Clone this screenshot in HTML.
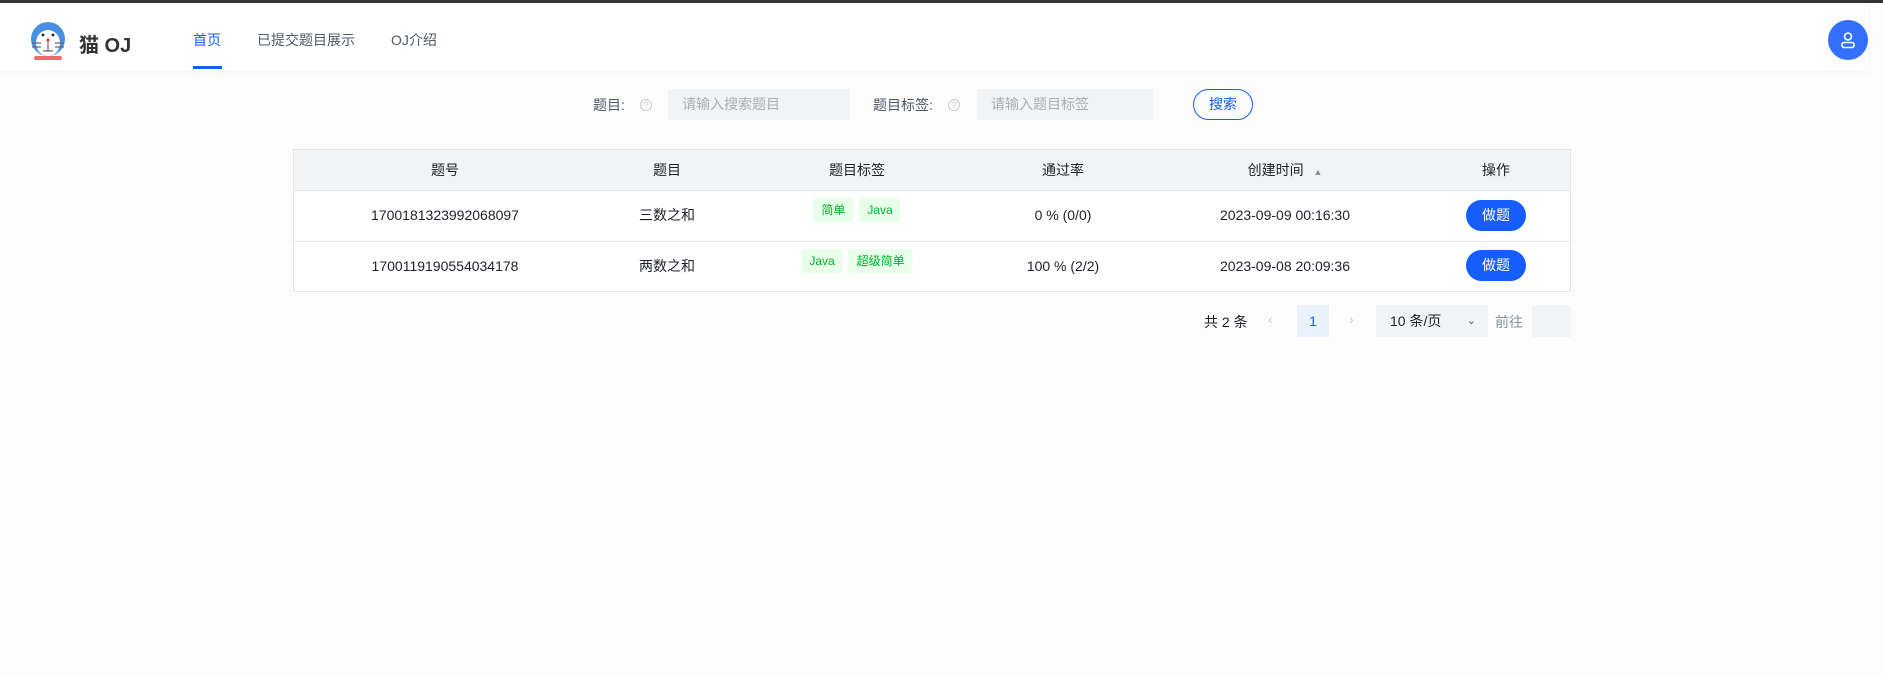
<!DOCTYPE html>
<html><head><meta charset="utf-8"><style>
*{box-sizing:border-box;margin:0;padding:0}
body{width:1883px;height:675px;background:#fcfcfc;font-family:"Liberation Sans","Noto Sans CJK SC",sans-serif;color:#1d2129;position:relative;overflow:hidden;font-size:14px}
.abs{position:absolute}
.top{left:0;top:0;width:1883px;height:3px;background:#333}
.hdr{left:0;top:3px;width:1868px;height:68px;background:#fff;box-shadow:0 2px 4px rgba(0,0,0,.03)}
.nav{top:30px;font-size:14px;color:#4e5969}
.inp{background:#f2f3f5;color:#a9aeb8;font-size:14px;line-height:31px;padding-left:14px;height:31px}
.q{width:12px;height:12px;border:1px solid #c9cdd4;border-radius:50%;font-size:9px;color:#c9cdd4;text-align:center;line-height:10px}
.tbl{left:293px;top:149px;width:1278px;height:143px;border:1px solid #e5e6eb;background:#fff}
.row{position:absolute;left:0;width:100%;border-bottom:1px solid #e5e6eb}
.c{position:absolute;transform:translateX(-50%);white-space:nowrap;font-size:14px;line-height:20px}
.tag{display:inline-block;background:#e8ffea;color:#00b42a;font-size:12px;height:24px;line-height:24px;padding:0 8px;margin:0 3px;border-radius:2px}
.btn{background:#165dff;color:#fff;border-radius:16px;width:60px;height:31px;line-height:31px;text-align:center;font-size:14px}
</style></head><body>
<div class="abs top"></div>
<div class="abs hdr"></div>
<svg class="abs" style="left:28px;top:21px" width="40" height="42" viewBox="0 0 40 42">
<ellipse cx="20" cy="18" rx="17" ry="17" fill="#4a90e2"/>
<ellipse cx="20" cy="22" rx="12" ry="13" fill="#fff"/>
<circle cx="15" cy="14" r="1.5" fill="#333"/><circle cx="25" cy="14" r="1.5" fill="#333"/>
<circle cx="20" cy="19" r="1.5" fill="#e33"/>
<path d="M4 22h9M4 26h9M27 22h9M27 26h9M20 20v10M15 30h10" stroke="#666" stroke-width="1.2" fill="none"/>
<rect x="6" y="35" width="28" height="4" rx="2" fill="#f06a6a"/>
</svg>
<div class="abs" style="left:79px;top:29px;font-size:20px;font-weight:bold;color:#333">猫 OJ</div>
<div class="abs nav" style="left:193px;color:#165dff">首页</div>
<div class="abs" style="left:193px;top:66px;width:29px;height:3px;background:#165dff"></div>
<div class="abs nav" style="left:257px">已提交题目展示</div>
<div class="abs nav" style="left:391px">OJ介绍</div>
<div class="abs" style="left:1828px;top:20px;width:40px;height:40px;border-radius:50%;background:#3370ff"></div>
<svg class="abs" style="left:1838px;top:30px" width="20" height="20" viewBox="0 0 20 20"><circle cx="10" cy="6.5" r="3.5" fill="none" stroke="#fff" stroke-width="1.6"/><rect x="4" y="12.5" width="12" height="5" rx="2" fill="none" stroke="#fff" stroke-width="1.6"/></svg>

<div class="abs" style="left:593px;top:95px;color:#4e5969">题目:</div>
<div class="abs q" style="left:640px;top:99px">?</div>
<div class="abs inp" style="left:668px;top:89px;width:182px">请输入搜索题目</div>
<div class="abs" style="left:873px;top:95px;color:#4e5969">题目标签:</div>
<div class="abs q" style="left:948px;top:99px">?</div>
<div class="abs inp" style="left:977px;top:89px;width:176px">请输入题目标签</div>
<div class="abs" style="left:1193px;top:89px;width:60px;height:31px;border:1px solid #165dff;border-radius:16px;color:#165dff;text-align:center;line-height:29px">搜索</div>

<div class="abs tbl">
<div class="row" style="top:0;height:41px;background:#f2f3f5">
<div class="c" style="left:151px;top:10px">题号</div><div class="c" style="left:373px;top:10px">题目</div><div class="c" style="left:563px;top:10px">题目标签</div><div class="c" style="left:769px;top:10px">通过率</div><div class="c" style="left:991px;top:10px">创建时间 <span style="color:#86909c;font-size:9px;margin-left:6px">▲</span></div><div class="c" style="left:1202px;top:10px">操作</div>
</div>
<div class="row" style="top:41px;height:51px">
<div class="c" style="left:151px;top:14px">1700181323992068097</div><div class="c" style="left:373px;top:14px">三数之和</div><div class="c" style="left:563px;top:7px"><span class="tag">简单</span><span class="tag">Java</span></div><div class="c" style="left:769px;top:14px">0 % (0/0)</div><div class="c" style="left:991px;top:14px">2023-09-09 00:16:30</div><div class="c btn" style="left:1202px;top:9px">做题</div>
</div>
<div class="row" style="top:92px;height:50px;border-bottom:none">
<div class="c" style="left:151px;top:14px">1700119190554034178</div><div class="c" style="left:373px;top:14px">两数之和</div><div class="c" style="left:563px;top:7px"><span class="tag">Java</span><span class="tag">超级简单</span></div><div class="c" style="left:769px;top:14px">100 % (2/2)</div><div class="c" style="left:991px;top:14px">2023-09-08 20:09:36</div><div class="c btn" style="left:1202px;top:8px">做题</div>
</div>
</div>

<div class="abs" style="left:1204px;top:312px">共 2 条</div>
<div class="abs" style="left:1268px;top:311px;color:#c9cdd4">‹</div>
<div class="abs" style="left:1297px;top:305px;width:32px;height:32px;background:#e8f3ff;color:#165dff;text-align:center;line-height:32px">1</div>
<div class="abs" style="left:1349px;top:311px;color:#c9cdd4">›</div>
<div class="abs" style="left:1376px;top:305px;width:112px;height:32px;background:#f2f3f5;line-height:32px;padding-left:14px">10 条/页<span style="position:absolute;right:12px;color:#4e5969;font-size:11px">⌄</span></div>
<div class="abs" style="left:1495px;top:312px;color:#86909c">前往</div>
<div class="abs" style="left:1532px;top:305px;width:39px;height:32px;background:#f2f3f5"></div>
</body></html>
